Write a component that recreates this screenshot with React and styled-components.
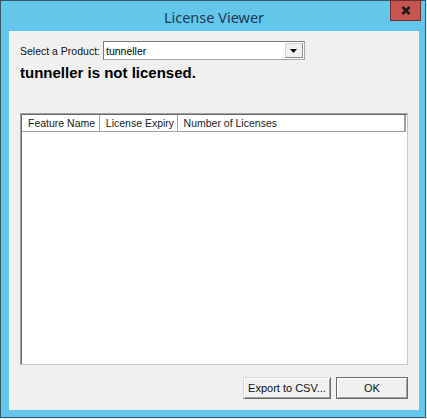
import React from "react";
import styled, { createGlobalStyle } from "styled-components";

const GlobalStyle = createGlobalStyle`
  html, body {
    margin: 0;
    padding: 0;
    background: #e9ecee;
  }
  body {
    font-family: "Liberation Sans", Arial, sans-serif;
  }
`;

const columns = [
  { label: "Feature Name", width: 78 },
  { label: "License Expiry", width: 78 },
  { label: "Number of Licenses", width: 228 },
];

const App = () => {
  return (
    <>
      <GlobalStyle />
      <Window>
        <TitleBar>
          <Title>License Viewer</Title>
          <CloseButton aria-label="Close">
            <svg width="10" height="9" viewBox="0 0 10 9">
              <path d="M1.5 1 L8.5 8 M8.5 1 L1.5 8" stroke="#1b1b1b" strokeWidth="2.6" />
            </svg>
          </CloseButton>
        </TitleBar>
        <Client>
          <ProductRow>
            <Label>Select a Product:</Label>
            <Select>
              <SelectValue>tunneller</SelectValue>
              <DropButton>
                <svg width="7" height="4" viewBox="0 0 7 4">
                  <path d="M0 0 H7 L3.5 4 Z" fill="#000" />
                </svg>
              </DropButton>
            </Select>
          </ProductRow>
          <Status>tunneller is not licensed.</Status>
          <ListView>
            <Header>
              {columns.map((c) => (
                <HeaderCell key={c.label} style={{ width: c.width }}>
                  {c.label}
                </HeaderCell>
              ))}
              <HeaderFill />
            </Header>
            <ListBody />
          </ListView>
          <ButtonRow>
            <Button>Export to CSV...</Button>
            <Button $default>OK</Button>
          </ButtonRow>
        </Client>
      </Window>
    </>
  );
};

const Window = styled.div`
  width: 426px;
  height: 418px;
  box-sizing: border-box;
  border: 1px solid #3b5668;
  background: #62c7eb;
  display: flex;
  flex-direction: column;
  padding: 0 6px 7px 8px;
`;

const TitleBar = styled.div`
  height: 30px;
  position: relative;
  display: flex;
  align-items: center;
  justify-content: center;
  flex-shrink: 0;
`;

const Title = styled.div`
  font-family: "Noto Sans", "Open Sans", sans-serif;
  font-size: 14.5px;
  color: #1d3a52;
  margin-top: 1px;
`;

const CloseButton = styled.div`
  position: absolute;
  top: -1px;
  right: -2px;
  width: 31px;
  height: 21px;
  box-sizing: border-box;
  background: #c65451;
  border: 1px solid #6e3331;
  display: flex;
  align-items: center;
  justify-content: center;
`;

const Client = styled.div`
  flex: 1;
  background: #f0f0f0;
  display: flex;
  flex-direction: column;
  padding: 10px 11px 11px 11px;
  font-family: "Liberation Sans", Arial, sans-serif;
  font-size: 10.5px;
  color: #000;
`;

const ProductRow = styled.div`
  display: flex;
  align-items: center;
  gap: 3px;
  height: 19px;
`;

const Label = styled.span`
  color: #111;
`;

const Select = styled.div`
  width: 202px;
  height: 19px;
  box-sizing: border-box;
  background: #fff;
  border: 1px solid #7a7a7a;
  border-right-color: #a8a8a8;
  border-bottom-color: #a8a8a8;
  display: flex;
  align-items: stretch;
`;

const SelectValue = styled.div`
  flex: 1;
  padding-left: 2px;
  display: flex;
  align-items: center;
`;

const DropButton = styled.div`
  width: 16px;
  margin: 1px;
  background: #f0f0f0;
  border: 1px solid #d4d4d4;
  border-right-color: #8a8a8a;
  border-bottom-color: #8a8a8a;
  display: flex;
  align-items: center;
  justify-content: center;
`;

const Status = styled.div`
  font-weight: bold;
  font-size: 15px;
  margin-top: 4px;
`;

const ListView = styled.div`
  margin-top: 32px;
  flex: 1;
  display: flex;
  flex-direction: column;
  border: 1px solid #a0a0a0;
  border-right-color: #c8c8c8;
  border-bottom-color: #c8c8c8;
  box-shadow: inset 1px 1px 0 #696969;
  background: #fff;
`;

const Header = styled.div`
  display: flex;
  height: 17px;
  margin: 1px 0 0 1px;
  flex-shrink: 0;
`;

const HeaderCell = styled.div`
  box-sizing: border-box;
  padding-left: 6px;
  display: flex;
  align-items: center;
  border-right: 1px solid #a0a0a0;
  border-bottom: 1px solid #a0a0a0;
  box-shadow: inset -1px 0 0 #fff;
  white-space: nowrap;
  color: #222;
`;

const HeaderFill = styled.div`
  flex: 1;
  border-bottom: 1px solid #a0a0a0;
  border-right: 1px solid #a0a0a0;
  margin-right: 1px;
`;

const ListBody = styled.div`
  flex: 1;
`;

const ButtonRow = styled.div`
  display: flex;
  justify-content: flex-end;
  gap: 5px;
  margin-top: 12px;
`;

const Button = styled.div`
  box-sizing: border-box;
  height: 22px;
  width: ${(p) => (p.$default ? "72px" : "88px")};
  display: flex;
  align-items: center;
  justify-content: center;
  background: #f0f0f0;
  border: 1px solid ${(p) => (p.$default ? "#6a6a6a" : "#d6d6d6")};
  border-right-color: #6a6a6a;
  border-bottom-color: #6a6a6a;
  box-shadow: inset 1px 1px 0 #fff, inset -1px -1px 0 #a0a0a0;
  font-size: 11px;
  color: #111;
`;

export default App;
